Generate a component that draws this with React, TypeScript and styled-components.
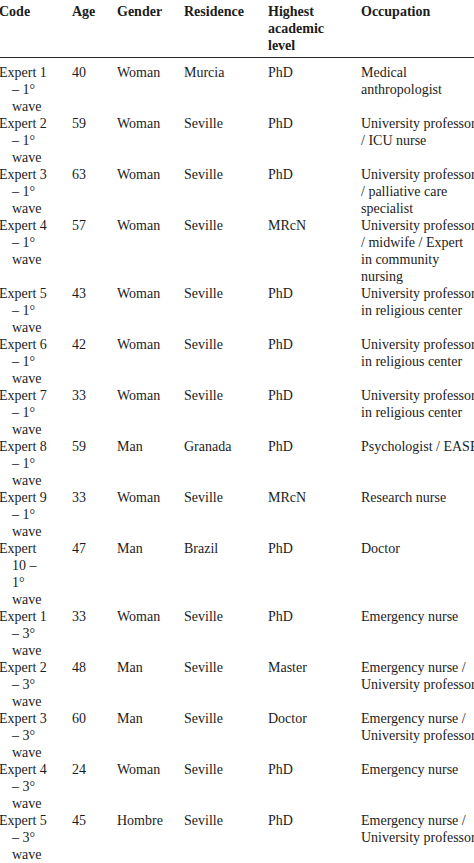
import styled, { createGlobalStyle } from "styled-components";

const GlobalStyle = createGlobalStyle`
  html, body {
    margin: 0;
    padding: 0;
    background: #ffffff;
    overflow: hidden;
  }
`;

const columns = "73px 45px 67px 84px 93px 150px";

const Page = styled.div`
  width: 474px;
  height: 863px;
  overflow: hidden;
  font-family: "Liberation Serif", "Times New Roman", serif;
  font-size: 14px;
  line-height: 17px;
  color: #1c1c1c;
`;

const Table = styled.div`
  width: 512px;
  margin-left: -1px;
`;

const HeaderRow = styled.div`
  display: grid;
  grid-template-columns: ${columns};
  padding: 3px 0 3px;
  border-bottom: 1px solid #2a2a2a;
  font-weight: bold;
`;

const Body = styled.div`
  padding-top: 6px;
`;

const Row = styled.div`
  display: grid;
  grid-template-columns: ${columns};
`;

const Cell = styled.div`
  display: flex;
  flex-direction: column;
`;

const Line = styled.span<{ $indent?: boolean }>`
  display: block;
  white-space: nowrap;
  padding-left: ${(p) => (p.$indent ? "13px" : "0")};
`;

type Expert = {
  code: string[];
  age: string;
  gender: string;
  residence: string;
  level: string;
  occupation: string[];
};

const wave1 = (n: number) => [`Expert ${n}`, "– 1°", "wave"];
const wave3 = (n: number) => [`Expert ${n}`, "– 3°", "wave"];
const religious = ["University professor", "in religious center"];
const emergencyProf = ["Emergency nurse /", "University professor"];

const experts: Expert[] = [
  { code: wave1(1), age: "40", gender: "Woman", residence: "Murcia", level: "PhD", occupation: ["Medical", "anthropologist"] },
  { code: wave1(2), age: "59", gender: "Woman", residence: "Seville", level: "PhD", occupation: ["University professor", "/ ICU nurse"] },
  { code: wave1(3), age: "63", gender: "Woman", residence: "Seville", level: "PhD", occupation: ["University professor", "/ palliative care", "specialist"] },
  { code: wave1(4), age: "57", gender: "Woman", residence: "Seville", level: "MRcN", occupation: ["University professor", "/ midwife / Expert", "in community", "nursing"] },
  { code: wave1(5), age: "43", gender: "Woman", residence: "Seville", level: "PhD", occupation: religious },
  { code: wave1(6), age: "42", gender: "Woman", residence: "Seville", level: "PhD", occupation: religious },
  { code: wave1(7), age: "33", gender: "Woman", residence: "Seville", level: "PhD", occupation: religious },
  { code: wave1(8), age: "59", gender: "Man", residence: "Granada", level: "PhD", occupation: ["Psychologist / EASP"] },
  { code: wave1(9), age: "33", gender: "Woman", residence: "Seville", level: "MRcN", occupation: ["Research nurse"] },
  { code: ["Expert", "10 –", "1°", "wave"], age: "47", gender: "Man", residence: "Brazil", level: "PhD", occupation: ["Doctor"] },
  { code: wave3(1), age: "33", gender: "Woman", residence: "Seville", level: "PhD", occupation: ["Emergency nurse"] },
  { code: wave3(2), age: "48", gender: "Man", residence: "Seville", level: "Master", occupation: emergencyProf },
  { code: wave3(3), age: "60", gender: "Man", residence: "Seville", level: "Doctor", occupation: emergencyProf },
  { code: wave3(4), age: "24", gender: "Woman", residence: "Seville", level: "PhD", occupation: ["Emergency nurse"] },
  { code: wave3(5), age: "45", gender: "Hombre", residence: "Seville", level: "PhD", occupation: emergencyProf },
];

const Lines = ({ lines, hanging }: { lines: string[]; hanging?: boolean }) => (
  <Cell>
    {lines.map((l, i) => (
      <Line key={i} $indent={hanging && i > 0}>
        {l}
      </Line>
    ))}
  </Cell>
);

export default function App() {
  return (
    <Page>
      <GlobalStyle />
      <Table>
        <HeaderRow>
          <Lines lines={["Code"]} />
          <Lines lines={["Age"]} />
          <Lines lines={["Gender"]} />
          <Lines lines={["Residence"]} />
          <Lines lines={["Highest", "academic", "level"]} />
          <Lines lines={["Occupation"]} />
        </HeaderRow>
        <Body>
          {experts.map((e, i) => (
            <Row key={i}>
              <Lines lines={e.code} hanging />
              <Lines lines={[e.age]} />
              <Lines lines={[e.gender]} />
              <Lines lines={[e.residence]} />
              <Lines lines={[e.level]} />
              <Lines lines={e.occupation} />
            </Row>
          ))}
        </Body>
      </Table>
    </Page>
  );
}
